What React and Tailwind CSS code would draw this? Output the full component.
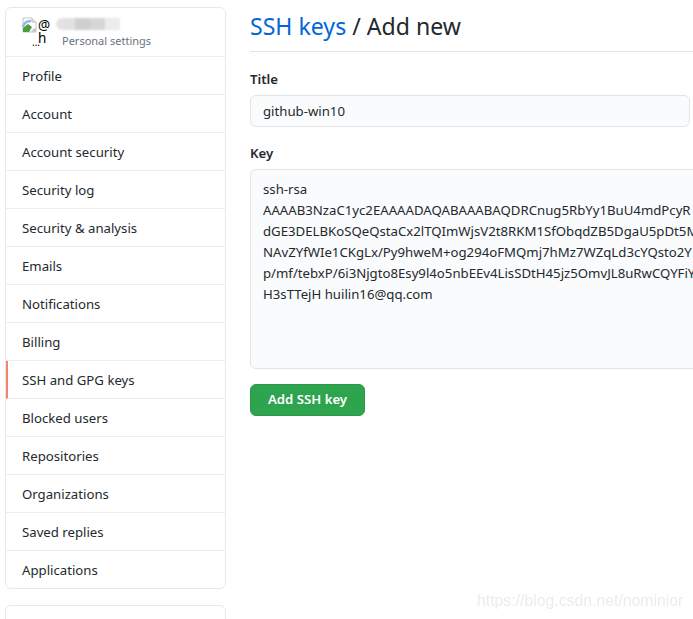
import React from 'react';

const menu = [
  'Profile',
  'Account',
  'Account security',
  'Security log',
  'Security & analysis',
  'Emails',
  'Notifications',
  'Billing',
  'SSH and GPG keys',
  'Blocked users',
  'Repositories',
  'Organizations',
  'Saved replies',
  'Applications',
];

const keyLines = [
  'ssh-rsa',
  'AAAAB3NzaC1yc2EAAAADAQABAAABAQDRCnug5RbYy1BuU4mdPcyR',
  'dGE3DELBKoSQeQstaCx2lTQImWjsV2t8RKM1SfObqdZB5DgaU5pDt5M',
  'NAvZYfWIe1CKgLx/Py9hweM+og294oFMQmj7hMz7WZqLd3cYQsto2Y',
  'p/mf/tebxP/6i3Njgto8Esy9l4o5nbEEv4LisSDtH45jz5OmvJL8uRwCQYFiY',
  'H3sTTejH huilin16@qq.com',
];

function BrokenImage() {
  return (
    <svg width="16" height="16" viewBox="0 0 16 16" className="absolute left-0 top-0">
      <path d="M1 1h9l4 4v10H1z" fill="#fff" stroke="#c4c4c4" />
      <path d="M10 1v4h4" fill="#e8e8e8" stroke="#bdbdbd" />
      <path d="M1 15V11l5-4 4 3-3 5z" fill="#4f9d3a" />
      <path d="M1 10c1-4 3-6 8-6" fill="none" stroke="#8fb6e8" strokeWidth="2.5" />
      <path d="M9 15l3-4 2 1v3z" fill="#c9c9c9" />
    </svg>
  );
}

function App() {
  return (
    <div className="relative flex h-[619px] w-[693px] gap-6 overflow-hidden bg-white pl-[5px] pt-[7px] font-['Noto_Sans','Open_Sans',sans-serif] text-[13.2px] text-[#24292e]">
      <div className="w-[221px] shrink-0">
        <div className="rounded-md border border-[#e6e8ec]">
          <div className="flex h-[49px] items-start border-b border-[#eaecef] pl-4">
            <div className="relative mt-[9px] h-[32px] w-[32px] shrink-0 text-[13.5px] text-black">
              <BrokenImage />
              <span className="mt-px block pl-4 leading-[14px]">@</span>
              <span className="block pl-4 leading-[13px]">h</span>
              <span className="-mt-[3px] block pl-[10px] text-[10px] leading-[1px]">...</span>
            </div>
            <div className="ml-2 min-w-0">
              <div className="-ml-[6px] mt-[10px] flex h-[12px] blur-[1px]">
                <div className="h-full w-[19px] rounded-l-md bg-[#e2e2e2]" />
                <div className="h-full w-[15px] bg-[#cfcfcf]" />
                <div className="h-full w-[15px] bg-[#d6d6d6]" />
                <div className="h-full w-[15px] bg-[#ececec]" />
              </div>
              <div className="mt-[3px] text-[11px] leading-[16px] text-[#6a737d]">Personal settings</div>
            </div>
          </div>
          {menu.map((item, i) => (
            <div
              key={item}
              className={
                item === 'SSH and GPG keys'
                  ? 'flex h-[38px] items-center border-b border-l-2 border-b-[#eaecef] border-l-[#f9826c] pl-[14px] pt-[2px]'
                  : i === menu.length - 1
                  ? 'flex h-[37px] items-center pl-4 pt-[2px]'
                  : 'flex h-[38px] items-center border-b border-[#eaecef] pl-4 pt-[2px]'
              }
            >
              {item}
            </div>
          ))}
        </div>
        <div className="mt-4 h-[60px] rounded-md border border-[#e6e8ec]" />
      </div>

      <div className="w-[460px] shrink-0">
        <div className="mr-[-20px] border-b border-[#e1e4e8] pb-[6px] pt-px text-[23.1px] leading-[37px]">
          <span className="text-[#0366d6]">SSH keys</span> / Add new
        </div>
        <div className="mt-[17px] font-semibold leading-5">Title</div>
        <div className="mt-[6px] flex h-[32px] w-[440px] items-center rounded-md border border-[#e1e4e8] bg-[#fafbfc] px-3 pt-px">
          github-win10
        </div>
        <div className="mt-[16px] font-semibold leading-5">Key</div>
        <div className="mt-[6px] h-[200px] w-[460px] overflow-hidden whitespace-nowrap rounded-md border border-[#e1e4e8] bg-[#fafbfc] px-3 py-[9px] leading-[21px]">
          {keyLines.map((line) => (
            <div key={line}>{line}</div>
          ))}
        </div>
        <button className="mt-[15px] flex h-[32px] w-[115px] items-center justify-center rounded-md border border-[#2c974b] bg-[#2ea44f] font-semibold text-white">
          Add SSH key
        </button>
      </div>

      <div className="absolute bottom-[8px] left-[477px] font-['Liberation_Sans',sans-serif] text-[15.8px] leading-5 text-[#ececec] blur-[0.4px]">
        https://blog.csdn.net/nominior
      </div>
    </div>
  );
}

export default App;
